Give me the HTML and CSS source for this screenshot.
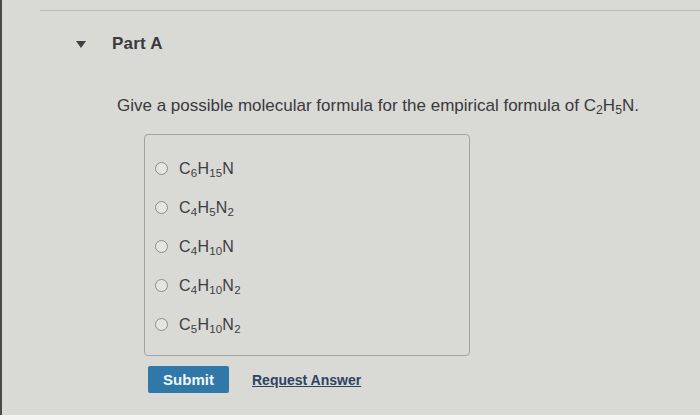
FILE: index.html
```html
<!DOCTYPE html>
<html>
<head>
<meta charset="utf-8">
<link rel="stylesheet" href="styles.css">
</head>
<body>
<div class="page">
  <div class="topline"></div>
  <div class="part-header">
    <span class="caret"></span>
    <span class="part-title">Part A</span>
  </div>
  <p class="question">Give a possible molecular formula for the empirical formula of C<sub>2</sub>H<sub>5</sub>N.</p>
  <div class="choices">
    <label class="choice"><span class="radio"></span><span class="formula">C<sub>6</sub>H<sub>15</sub>N</span></label>
    <label class="choice"><span class="radio"></span><span class="formula">C<sub>4</sub>H<sub>5</sub>N<sub>2</sub></span></label>
    <label class="choice"><span class="radio"></span><span class="formula">C<sub>4</sub>H<sub>10</sub>N</span></label>
    <label class="choice"><span class="radio"></span><span class="formula">C<sub>4</sub>H<sub>10</sub>N<sub>2</sub></span></label>
    <label class="choice"><span class="radio"></span><span class="formula">C<sub>5</sub>H<sub>10</sub>N<sub>2</sub></span></label>
  </div>
  <div class="actions">
    <button class="submit">Submit</button>
    <a class="request" href="#">Request Answer</a>
  </div>
</div>
</body>
</html>
```
FILE: styles.css
```css
html, body {
  margin: 0;
  padding: 0;
  background: #f4f4f2;
}
body {
  font-family: "Liberation Sans", Arial, sans-serif;
  color: #3b3b3d;
}
.page {
  box-sizing: border-box;
  height: 415px;
  width: 700px;
  background: #d9d9d6;
  border-left: 2px solid #4a4a4a;
  padding-top: 10px;
  overflow: hidden;
}
.topline {
  margin-left: 38px;
  border-top: 1px solid #b9b9b6;
}
.part-header {
  display: flex;
  align-items: center;
  margin-top: 24px;
  padding-left: 74px;
  height: 18px;
}
.caret {
  width: 0;
  height: 0;
  border-left: 5.5px solid transparent;
  border-right: 5.5px solid transparent;
  border-top: 7px solid #3f3f44;
}
.part-title {
  margin-left: 26px;
  font-size: 17px;
  font-weight: bold;
  color: #3a3a40;
  letter-spacing: 0.2px;
}
.question {
  margin: 43px 0 0 115px;
  font-size: 17px;
  line-height: 20px;
  color: #3a3a3c;
}
sub {
  font-size: 0.72em;
  vertical-align: -0.28em;
  line-height: 0;
}
.choices {
  box-sizing: border-box;
  margin: 18px 0 0 142px;
  width: 326px;
  height: 222px;
  border: 1px solid #a3a3a0;
  border-radius: 4px;
  padding: 14px 0 0 10px;
  display: flex;
  flex-direction: column;
}
.choice {
  display: flex;
  align-items: center;
  height: 39px;
  gap: 11px;
}
.radio {
  box-sizing: border-box;
  width: 13px;
  height: 13px;
  border-radius: 50%;
  border: 1.5px solid #8c8c8a;
  background: #e4e4e1;
}
.formula {
  font-size: 16px;
  letter-spacing: 0.2px;
  color: #3d3d40;
}
.actions {
  display: flex;
  align-items: center;
  margin: 10px 0 0 146px;
  gap: 23px;
}
.submit {
  width: 81px;
  height: 27px;
  border: none;
  border-radius: 2px;
  background: #2f78a8;
  color: #f2f6f8;
  font-family: "Liberation Sans", Arial, sans-serif;
  font-size: 15px;
  font-weight: bold;
  padding: 0;
}
.request {
  font-size: 14px;
  font-weight: bold;
  color: #2d4463;
  text-decoration: underline;
}
```
